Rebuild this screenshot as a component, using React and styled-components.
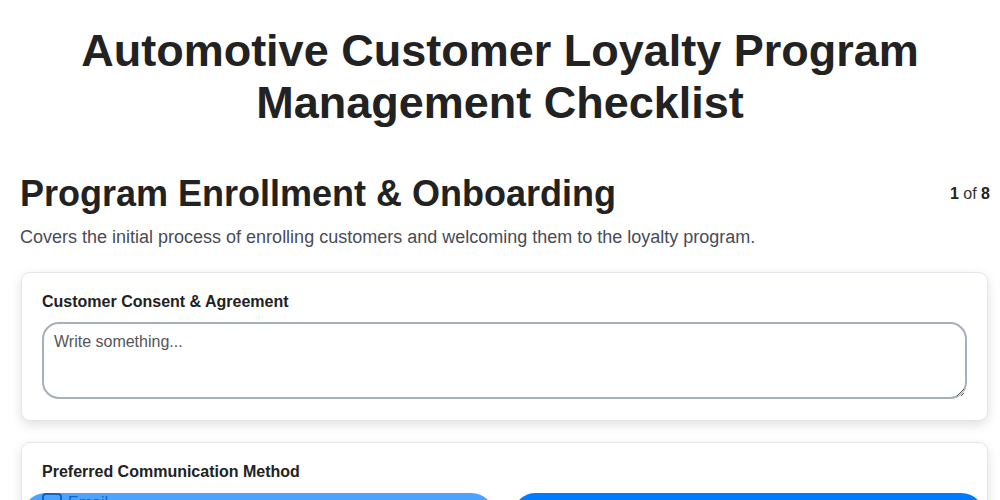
import React from "react";
import styled, { createGlobalStyle } from "styled-components";

const GlobalStyle = createGlobalStyle`
  body {
    margin: 0;
    background: #fff;
    font-family: "Liberation Sans", Arial, sans-serif;
    color: #222;
  }
`;

const Page = styled.div`
  padding: 0 12px 80px 20px;
`;

const Title = styled.h1`
  margin: 25px 0 0;
  text-align: center;
  font-size: 45px;
  line-height: 52px;
  font-weight: 700;
  color: #222;
`;

const SectionHead = styled.div`
  display: flex;
  align-items: center;
  justify-content: space-between;
  margin-top: 43px;
`;

const SectionTitle = styled.h2`
  margin: 0;
  font-size: 36px;
  line-height: 43px;
  font-weight: 700;
  color: #222;
`;

const Counter = styled.div`
  font-size: 16px;
  color: #333;
  margin-right: -2px;
  b {
    color: #222;
  }
`;

const Description = styled.p`
  margin: 10px 0 23px;
  font-size: 18px;
  line-height: 24px;
  color: #474c55;
`;

const Card = styled.div`
  background: #fff;
  border: 1px solid #e6e7ec;
  border-radius: 9px;
  box-shadow: 0 4px 12px rgba(0, 0, 0, 0.12);
  padding: 20px 20px 21px 20px;
  margin: 0 0 21px 1px;
`;

const Label = styled.div`
  font-size: 16px;
  line-height: 18px;
  font-weight: 700;
  color: #222;
  margin-bottom: 11px;
`;

const TextArea = styled.textarea`
  display: block;
  box-sizing: border-box;
  width: 100%;
  height: 77px;
  border: 2px solid #a7afb7;
  border-radius: 17px;
  padding: 9px 10px;
  font-family: "Liberation Sans", Arial, sans-serif;
  font-size: 16px;
  color: #333;
  resize: vertical;
  outline: none;
  &::placeholder {
    color: #555;
  }
`;

const CheckRow = styled.label`
  display: flex;
  align-items: center;
  gap: 6px;
  margin-top: 12px;
  font-size: 16px;
  color: #333;
`;

const Box = styled.span`
  width: 16px;
  height: 16px;
  border: 2px solid #333;
  border-radius: 4px;
`;

const Footer = styled.div`
  position: fixed;
  left: 22px;
  right: 15px;
  bottom: -41px;
  display: flex;
  gap: 17px;
`;

const NavButton = styled.button`
  flex: 1;
  height: 48px;
  border: none;
  border-radius: 24px;
  background: #007bff;
  color: #fff;
  font-family: "Liberation Sans", Arial, sans-serif;
  font-size: 16px;
  font-weight: 700;
  opacity: ${(p) => (p.disabled ? 0.7 : 1)};
`;

export default function App() {
  return (
    <>
      <GlobalStyle />
      <Title>
        Automotive Customer Loyalty Program
        <br />
        Management Checklist
      </Title>
      <Page>
        <SectionHead>
          <SectionTitle>Program Enrollment &amp; Onboarding</SectionTitle>
          <Counter>
            <b>1</b> of <b>8</b>
          </Counter>
        </SectionHead>
        <Description>
          Covers the initial process of enrolling customers and welcoming them
          to the loyalty program.
        </Description>
        <Card>
          <Label>Customer Consent &amp; Agreement</Label>
          <TextArea placeholder="Write something..." />
        </Card>
        <Card>
          <Label>Preferred Communication Method</Label>
          <CheckRow>
            <Box />
            Email
          </CheckRow>
          <CheckRow>
            <Box />
            SMS
          </CheckRow>
        </Card>
      </Page>
      <Footer>
        <NavButton disabled>Previous</NavButton>
        <NavButton>Next</NavButton>
      </Footer>
    </>
  );
}
